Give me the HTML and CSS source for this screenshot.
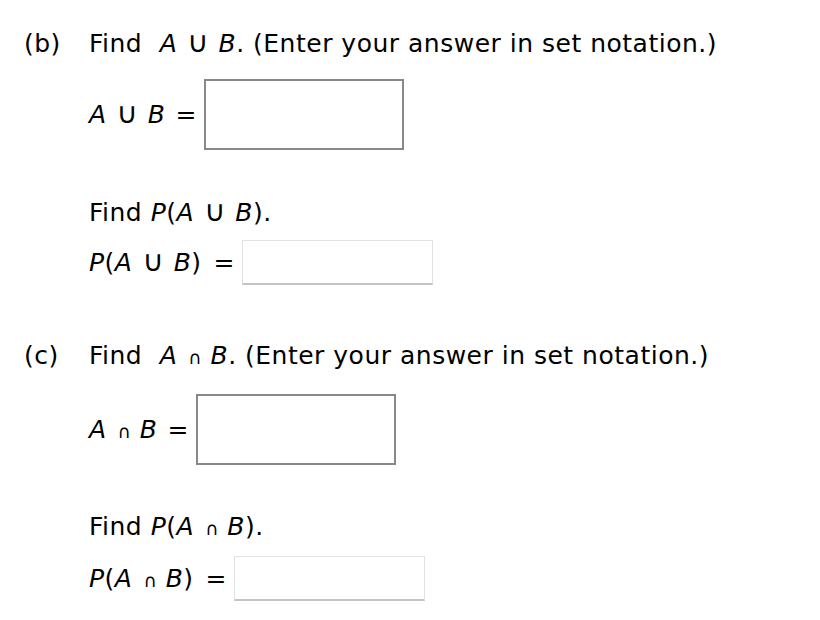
FILE: index.html
```html
<!DOCTYPE html>
<html>
<head>
<meta charset="utf-8">
<link rel="stylesheet" href="styles.css">
</head>
<body>
<div class="page">
  <div class="part part-b">
    <div class="tag">(b)</div>
    <div class="body">
      <div class="q">Find <span class="m m-head"><i>A</i><span class="op cup">∪</span><i>B</i></span>. (Enter your answer in set notation.)</div>
      <div class="row row-set">
        <span class="lbl"><i>A</i><span class="op cup">∪</span><i>B</i><span class="eq">=</span></span>
        <span class="setbox"></span>
      </div>
      <div class="q q-find">Find <i>P</i>(<i>A</i><span class="op cup">∪</span><i>B</i>).</div>
      <div class="row row-num">
        <span class="lbl"><i>P</i>(<i>A</i><span class="op cup">∪</span><i>B</i>)<span class="eq eq-wide">=</span></span>
        <span class="numbox"></span>
      </div>
    </div>
  </div>
  <div class="part part-c">
    <div class="tag">(c)</div>
    <div class="body">
      <div class="q">Find <span class="m m-head"><i>A</i><span class="op cap">∩</span><i>B</i></span>. (Enter your answer in set notation.)</div>
      <div class="row row-set">
        <span class="lbl"><i>A</i><span class="op cap">∩</span><i>B</i><span class="eq">=</span></span>
        <span class="setbox"></span>
      </div>
      <div class="q q-find">Find <i>P</i>(<i>A</i><span class="op cap">∩</span><i>B</i>).</div>
      <div class="row row-num">
        <span class="lbl"><i>P</i>(<i>A</i><span class="op cap">∩</span><i>B</i>)<span class="eq eq-wide">=</span></span>
        <span class="numbox"></span>
      </div>
    </div>
  </div>
</div>
</body>
</html>
```
FILE: styles.css
```css
html, body {
  margin: 0;
  padding: 0;
  background: #fff;
}
body {
  font-family: "DejaVu Sans", Verdana, sans-serif;
  font-size: 25px;
  letter-spacing: 0.5px;
  color: #000;
}
i {
  font-style: italic;
}
.m-head {
  margin-left: 9px;
}
.op {
  letter-spacing: 0;
  line-height: 0;
}
.cup {
  font-size: 29px;
  margin: 0 10px 0 10px;
}
.cap {
  font-size: 18px;
  margin: 0 9px 0 11px;
}
.eq {
  margin-left: 10px;
}
.eq-wide {
  margin-left: 12px;
}
.lbl {
  line-height: 30px;
}
.page {
  padding: 29px 0 0 24px;
}
.part {
  display: flex;
}
.part-c {
  margin-top: 56px;
}
.tag {
  width: 65px;
  line-height: 30px;
}
.body {
  display: flex;
  flex-direction: column;
  align-items: flex-start;
}
.q {
  line-height: 30px;
}
.row {
  display: flex;
  align-items: center;
  gap: 7px;
}
.row-set {
  margin-top: 20px;
}
.part-c .row-set {
  margin-top: 23px;
}
.q-find {
  margin-top: 48px;
}
.part-c .q-find {
  margin-top: 47px;
}
.row-num {
  margin-top: 12px;
}
.part-c .row-num {
  margin-top: 14px;
}
.setbox {
  display: block;
  width: 196px;
  height: 67px;
  border: 2px solid #888;
}
.numbox {
  display: block;
  width: 189px;
  height: 42px;
  border: 1px solid #e2e2e2;
  border-bottom: 2px solid #c4c4c4;
}
```
